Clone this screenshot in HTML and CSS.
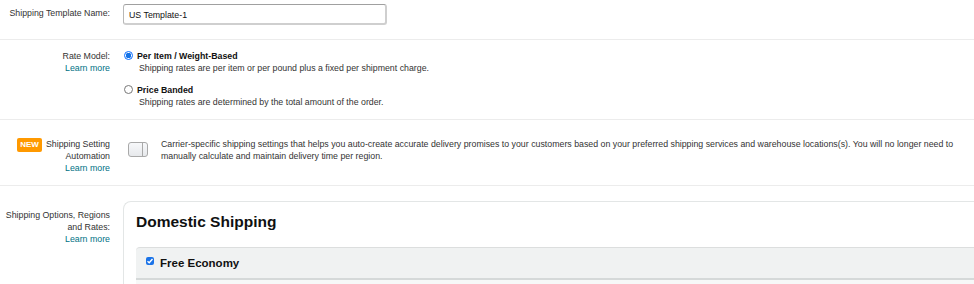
FILE: index.html
```html
<!DOCTYPE html>
<html>
<head>
<meta charset="utf-8">
<link rel="stylesheet" href="styles.css">
</head>
<body>
<div class="page">
  <div class="row row-name">
    <div class="label">Shipping Template Name:</div>
    <div class="content">
      <div class="input">US Template-1</div>
    </div>
  </div>

  <div class="row row-rate">
    <div class="label">Rate Model:<br><a class="link">Learn more</a></div>
    <div class="content">
      <div class="option">
        <span class="radio checked"></span>
        <div class="opt-text">
          <div class="opt-title">Per Item / Weight-Based</div>
          <div class="opt-desc">Shipping rates are per item or per pound plus a fixed per shipment charge.</div>
        </div>
      </div>
      <div class="option">
        <span class="radio"></span>
        <div class="opt-text">
          <div class="opt-title">Price Banded</div>
          <div class="opt-desc">Shipping rates are determined by the total amount of the order.</div>
        </div>
      </div>
    </div>
  </div>

  <div class="row row-auto">
    <div class="label label-auto">
      <span class="badge">NEW</span>
      <span>Shipping Setting<br>Automation<br><a class="link">Learn more</a></span>
    </div>
    <div class="content content-auto">
      <span class="toggle"><span class="knob"></span></span>
      <p class="auto-desc">Carrier-specific shipping settings that helps you auto-create accurate delivery promises to your customers based on your preferred shipping services and warehouse locations(s). You will no longer need to<br>manually calculate and maintain delivery time per region.</p>
    </div>
  </div>

  <div class="row row-options">
    <div class="label">Shipping Options, Regions<br>and Rates:<br><a class="link">Learn more</a></div>
    <div class="content">
      <div class="card">
        <h2 class="card-title">Domestic Shipping</h2>
        <div class="method">
          <span class="checkbox"><svg width="8" height="8" viewBox="0 0 8 8"><path d="M1.5 4.2 L3.2 5.8 L6.5 2" fill="none" stroke="#fff" stroke-width="1.4"/></svg></span>
          <span class="method-name">Free Economy</span>
        </div>
        <div class="method-next"></div>
      </div>
    </div>
  </div>
</div>
</body>
</html>
```
FILE: styles.css
```css
html, body {
  margin: 0;
  padding: 0;
  background: #fff;
}
body {
  font-family: "Liberation Sans", Arial, sans-serif;
  font-size: 8.8px;
  line-height: 12px;
  color: #111;
  overflow: hidden;
  width: 974px;
  height: 284px;
}
.page {
  display: flex;
  flex-direction: column;
  height: 284px;
  overflow: hidden;
}
.row {
  display: grid;
  grid-template-columns: 110px 1fr;
  column-gap: 13px;
  border-bottom: 1px solid #ececec;
  flex: none;
}
.label {
  text-align: right;
  color: #333;
}
.link {
  color: #007185;
  text-decoration: none;
}
.row-name {
  height: 40px;
  box-sizing: border-box;
  padding-top: 4px;
}
.row-name .label {
  padding-top: 3px;
}
.input {
  width: 264px;
  height: 21px;
  box-sizing: border-box;
  border: 1px solid #b8b8b8;
  border-top-color: #a0a0a0;
  border-right: 2px solid #cfcfcf;
  border-bottom: 2px solid #cfcfcf;
  border-radius: 3px;
  padding: 4px 0 0 5px;
  color: #111;
}
.row-rate {
  padding-top: 10px;
  height: 80px;
  box-sizing: border-box;
}
.option {
  display: flex;
  gap: 4px;
  margin-bottom: 10px;
}
.radio {
  width: 9px;
  height: 9px;
  box-sizing: border-box;
  border-radius: 50%;
  border: 1px solid #777;
  margin-top: 1px;
  margin-left: 1px;
  flex: none;
  background: #fff;
}
.radio.checked {
  border: 1px solid #0a6cff;
  background: radial-gradient(circle, #1473e6 0, #1473e6 2.6px, #fff 3px);
}
.opt-title {
  font-weight: bold;
  color: #111;
}
.opt-desc {
  color: #333;
  margin-left: 2px;
}
.row-auto {
  padding-top: 18px;
  height: 66px;
  box-sizing: border-box;
}
.label-auto {
  display: flex;
  justify-content: flex-end;
  gap: 4px;
}
.badge {
  background: #ff9900;
  color: #fff;
  font-weight: bold;
  font-size: 8px;
  line-height: 14px;
  height: 14px;
  padding: 0 3px;
  border-radius: 2px;
  margin-top: 0;
}
.content-auto {
  display: flex;
  gap: 13px;
  padding-left: 5px;
}
.toggle {
  width: 20px;
  height: 15px;
  box-sizing: border-box;
  border: 1px solid #a9a9a9;
  border-radius: 3px;
  background: linear-gradient(#f7f8fa, #e7e9ec);
  flex: none;
  margin-top: 4px;
  position: relative;
}
.knob {
  position: absolute;
  right: 4px;
  top: 0;
  bottom: 0;
  width: 1px;
  background: #a9a9a9;
}
.auto-desc {
  margin: 0;
  color: #333;
}
.row-options {
  border-bottom: none;
  padding-top: 15px;
}
.row-options .label {
  padding-top: 8px;
}
.card {
  border: 1px solid #e3e6e6;
  border-right: none;
  border-bottom: none;
  border-radius: 8px 0 0 0;
  padding: 10px 0 0 12px;
}
.card-title {
  margin: 0 0 15px 0;
  font-size: 15.5px;
  line-height: 20px;
  font-weight: bold;
  color: #0f1111;
}
.method {
  display: flex;
  align-items: center;
  gap: 6px;
  background: #f0f2f2;
  border-top: 1px solid #dcdede;
  border-bottom: 2px solid #d5d9d9;
  height: 30px;
  padding-left: 10px;
  border-radius: 4px 0 0 0;
}
.checkbox {
  width: 8px;
  height: 8px;
  background: #1a73e8;
  border-radius: 2px;
  display: flex;
  margin-top: -4px;
}
.method-name {
  font-size: 11.5px;
  font-weight: bold;
  color: #111;
}
.method-next {
  height: 4px;
  background: #f7f8f8;
}
```
